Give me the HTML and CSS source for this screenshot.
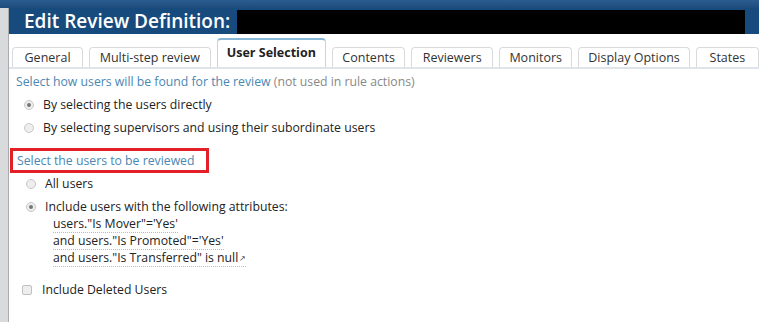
FILE: index.html
```html
<!DOCTYPE html>
<html>
<head>
<meta charset="utf-8">
<link rel="stylesheet" href="styles.css">
</head>
<body>
<div class="page">
  <div class="topstrip"></div>
  <div class="dialog">
    <div class="titlebar">
      <span class="title">Edit Review Definition:</span>
      <span class="redact"></span>
    </div>
    <div class="tabs">
      <span class="tab t1">General</span>
      <span class="tab t2">Multi-step review</span>
      <span class="tab t3 active">User Selection</span>
      <span class="tab t4">Contents</span>
      <span class="tab t5">Reviewers</span>
      <span class="tab t6">Monitors</span>
      <span class="tab t7">Display Options</span>
      <span class="tab t8">States</span>
    </div>
    <div class="content">
      <div class="heading first">Select how users will be found for the review <span class="note">(not used in rule actions)</span></div>
      <div class="opt o1"><span class="radio on"></span>By selecting the users directly</div>
      <div class="opt o2"><span class="radio"></span>By selecting supervisors and using their subordinate users</div>
      <div class="boxed"><span class="heading">Select the users to be reviewed</span></div>
      <div class="opt o3"><span class="radio"></span>All users</div>
      <div class="opt o4"><span class="radio on"></span>Include users with the following attributes:</div>
      <div class="attrs">
        <div class="attr">users."Is Mover"='Yes'</div>
        <div class="attr">and users."Is Promoted"='Yes'</div>
        <div class="attr">and users."Is Transferred" is null<span class="ext">&#x2197;</span></div>
      </div>
      <div class="chk"><span class="box"></span>Include Deleted Users</div>
    </div>
  </div>
</div>
</body>
</html>
```
FILE: styles.css
```css
html, body { margin: 0; padding: 0; }
body {
  width: 759px; height: 322px; overflow: hidden;
  font-family: "Open Sans", "Noto Sans", sans-serif;
  font-size: 12.25px; color: #222;
  background: #d9dadb;
}
.page { width: 759px; height: 322px; }
.topstrip { height: 8px; background: linear-gradient(#2c5d8f, #1d4c7c); }
.dialog {
  margin-left: 8px; height: 314px; background: #fff;
  border-left: 1px solid #a9abae;
}
.titlebar {
  height: 26px; background: #174b7d;
  display: flex; align-items: center;
}
.title {
  font-size: 19px; font-weight: 600; color: #fff; padding-left: 15px;
  line-height: 26px;
}
.redact {
  display: inline-block; height: 24px; width: 508px; background: #000;
  margin-left: 7px; margin-top: 2px;
}
.tabs {
  height: 29px; margin-top: 4px;
  border-bottom: 2px solid #dfe3ea;
  display: flex; align-items: flex-end; padding-left: 3px; gap: 6px;
}
.tab {
  height: 19px; line-height: 19px; text-align: center;
  border: 1px solid #d8dadd; border-bottom: none;
  border-radius: 4px 4px 0 0; color: #333; font-size: 12.5px;
  background: #fff;
}
.tab.active {
  height: 27px; line-height: 25px; font-weight: 700; color: #222;
  border: 1px solid #c9d3dc; border-bottom: none; border-top: 2px solid #86b6d6;
}
.t1 { width: 70px; }
.t2 { width: 121px; }
.t3 { width: 109px; }
.t4 { width: 72px; }
.t5 { width: 81px; }
.t6 { width: 72px; }
.t7 { width: 111px; }
.t8 { width: 62px; }
.content { padding-left: 1px; }
.heading { color: #4a87b3; }
.heading.first { margin-top: 5px; line-height: 16px; padding-left: 6px; }
.note { color: #888; }
.opt { display: flex; align-items: center; line-height: 16px; }
.o1 { margin-top: 7px; padding-left: 14px; }
.o2 { margin-top: 7px; padding-left: 14px; }
.o3 { margin-top: 3px; padding-left: 16px; }
.o4 { margin-top: 7px; padding-left: 16px; }
.radio {
  width: 8px; height: 8px; border-radius: 50%;
  border: 1px solid #c8c8c8; background: #eee; margin-right: 9px;
  position: relative; flex: none;
}
.radio.on::after {
  content: ""; position: absolute; left: 2px; top: 2px; width: 4px; height: 4px;
  border-radius: 50%; background: #777;
}
.boxed {
  margin-top: 12px; width: 189px; height: 19px;
  border: 3px solid #e32028; line-height: 19px; padding-left: 4px;
}
.attrs { padding-left: 43px; margin-top: 1px; }
.attr {
  display: table; line-height: 16px; border-bottom: 1px dotted #bbb;
  color: #222;
}
.ext { font-size: 8px; vertical-align: top; color: #555; margin-left: 1px; }
.chk { display: flex; align-items: center; margin-top: 15px; padding-left: 12px; line-height: 16px; }
.box {
  width: 8px; height: 8px; border: 1px solid #c0c0c0; background: #eee;
  border-radius: 2px; margin-right: 10px; flex: none;
}
```
